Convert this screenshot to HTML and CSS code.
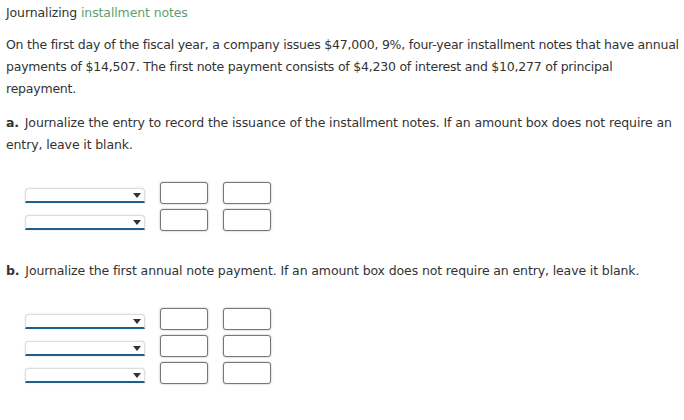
FILE: index.html
```html
<!DOCTYPE html>
<html lang="en">
<head>
    <meta charset="UTF-8">
    <title>Journalizing installment notes</title>
    <link rel="stylesheet" href="styles.css">
</head>
<body>
    <div class="question">
        <div class="title">Journalizing <span class="topic">installment notes</span></div>
        <p class="intro">On the first day of the fiscal year, a company issues $47,000, 9%, four-year installment notes that have annual payments of $14,507. The first note payment consists of $4,230 of interest and $10,277 of principal repayment.</p>

        <p class="part"><strong>a.</strong> Journalize the entry to record the issuance of the installment notes. If an amount box does not require an entry, leave it blank.</p>
        <div class="journal">
            <div class="entry-row">
                <div class="account"><span class="arrow"></span></div>
                <input class="amount" type="text">
                <input class="amount" type="text">
            </div>
            <div class="entry-row">
                <div class="account"><span class="arrow"></span></div>
                <input class="amount" type="text">
                <input class="amount" type="text">
            </div>
        </div>

        <p class="part part-next"><strong>b.</strong> Journalize the first annual note payment. If an amount box does not require an entry, leave it blank.</p>
        <div class="journal">
            <div class="entry-row">
                <div class="account"><span class="arrow"></span></div>
                <input class="amount" type="text">
                <input class="amount" type="text">
            </div>
            <div class="entry-row">
                <div class="account"><span class="arrow"></span></div>
                <input class="amount" type="text">
                <input class="amount" type="text">
            </div>
            <div class="entry-row">
                <div class="account"><span class="arrow"></span></div>
                <input class="amount" type="text">
                <input class="amount" type="text">
            </div>
        </div>
    </div>
</body>
</html>
```

FILE: styles.css
```css
body {
    margin: 0;
    background-color: white;
    font-family: "DejaVu Sans", Verdana, sans-serif;
    font-size: 12.5px;
    letter-spacing: -0.12px;
    color: #333;
}
.question {
    padding: 3px 2px 3px 6px;
}
.title {
    line-height: 18px;
    margin-top: 1px;
}
.topic {
    color: #5b9f6e;
}
.intro {
    margin: 12px 0 0;
    line-height: 22px;
    letter-spacing: -0.22px;
}
.part {
    margin: 12px 0 0;
    line-height: 22px;
}
.part strong {
    margin-right: 2px;
}
.part-next {
    margin-top: 29px;
}
.journal {
    margin: 26px 0 0 19px;
    display: flex;
    flex-direction: column;
    gap: 5px;
}
.entry-row {
    display: flex;
    align-items: center;
    height: 22px;
}
.account {
    position: relative;
    box-sizing: border-box;
    width: 120px;
    height: 15px;
    margin-top: 4px;
    border: 1px solid #ddd;
    border-bottom: 2px solid #1f5f8b;
    border-radius: 4px 4px 0 0;
    box-shadow: 0 0 2px rgba(0, 0, 0, 0.15);
    background-color: white;
}
.arrow {
    position: absolute;
    right: 3px;
    top: 4px;
    border-left: 4px solid transparent;
    border-right: 4px solid transparent;
    border-top: 5px solid #333;
}
.amount {
    box-sizing: border-box;
    width: 48px;
    height: 22px;
    margin: 0 0 0 15px;
    padding: 0;
    border: 1px solid #777;
    border-radius: 3px;
    box-shadow: 0 0 2px rgba(0, 0, 0, 0.35);
    background-color: white;
}
```
